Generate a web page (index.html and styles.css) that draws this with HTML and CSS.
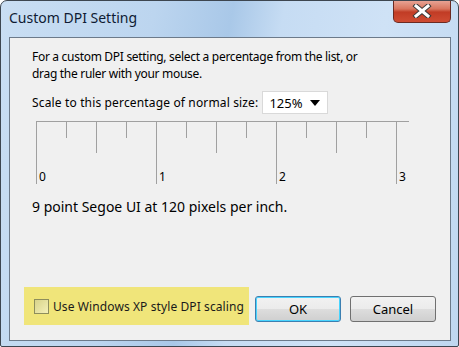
FILE: index.html
```html
<!DOCTYPE html>
<html lang="en">
<head>
    <meta charset="UTF-8">
    <title>Custom DPI Setting</title>
    <link rel="stylesheet" href="styles.css">
</head>
<body>
    <div class="window">
        <div class="titlebar">
            <span class="title">Custom DPI Setting</span>
            <div class="close">
                <svg width="22" height="14" viewBox="0 0 22 14">
                    <path d="M5 2 L17 12 M17 2 L5 12" stroke="#3b3b3b" stroke-width="5" stroke-linecap="square"/>
                    <path d="M5 2 L17 12 M17 2 L5 12" stroke="#fff" stroke-width="3" stroke-linecap="square"/>
                </svg>
            </div>
        </div>
        <div class="client">
            <p class="intro">For a custom DPI setting, select a percentage from the list, or<br>drag the ruler with your mouse.</p>
            <div class="scale-row">
                <span class="scale-label">Scale to this percentage of normal size:</span>
                <div class="dropdown">
                    <span>125%</span>
                    <svg width="10" height="6" viewBox="0 0 10 6"><path d="M0 0 H10 L5 6 Z" fill="#000"/></svg>
                </div>
            </div>
            <svg class="ruler" width="380" height="66" viewBox="0 0 380 66">
                <g stroke="#a0a0a0" stroke-width="1">
                    <path d="M5.5 0.5 H378"/>
                    <path d="M5.5 0 V63"/>
                    <path d="M35.5 0 V17 M65.5 0 V32 M95.5 0 V17"/>
                    <path d="M125.5 0 V63"/>
                    <path d="M155.5 0 V17 M185.5 0 V32 M215.5 0 V17"/>
                    <path d="M245.5 0 V63"/>
                    <path d="M275.5 0 V17 M305.5 0 V32 M335.5 0 V17"/>
                    <path d="M365.5 0 V63"/>
                </g>
                <g class="ruler-num">
                    <text x="8" y="60">0</text>
                    <text x="128" y="60">1</text>
                    <text x="248" y="60">2</text>
                    <text x="368" y="60">3</text>
                </g>
            </svg>
            <p class="sample">9 point Segoe UI at 120 pixels per inch.</p>
            <div class="footer">
                <label class="xp-option">
                    <span class="checkbox"></span>
                    <span>Use Windows XP style DPI scaling</span>
                </label>
                <button class="btn btn-default">OK</button>
                <button class="btn">Cancel</button>
            </div>
        </div>
    </div>
</body>
</html>
```

FILE: styles.css
```css
body {
    margin: 0;
    padding: 0;
    background: #fff;
    font-family: "Noto Sans", "Open Sans", sans-serif;
}
.window {
    width: 459px;
    height: 347px;
    box-sizing: border-box;
    border: 1px solid #3d4650;
    border-radius: 7px 7px 2px 2px;
    background: linear-gradient(100deg, #c9def3 0%, #bcd5ef 30%, #a9c8e8 45%, #c6dcf3 55%, #cfe2f6 75%, #bfd7f0 100%);
    display: flex;
    flex-direction: column;
    overflow: hidden;
}
.titlebar {
    height: 36px;
    display: flex;
    align-items: flex-start;
    justify-content: space-between;
}
.title {
    margin: 7px 0 0 8px;
    font-size: 14px;
    color: #0f1b33;
}
.close {
    width: 58px;
    height: 23px;
    margin-right: 7px;
    margin-top: -1px;
    box-sizing: border-box;
    border: 1px solid #6b2a22;
    border-top: none;
    border-radius: 0 0 5px 5px;
    background: linear-gradient(#e9a89a 0%, #d9765f 40%, #c13c25 55%, #cf4c33 100%);
    display: flex;
    align-items: center;
    justify-content: center;
}
.client {
    flex: 1;
    margin: 0 7px 5px 8px;
    border: 1px solid #6c7a8a;
    background: #f0f0f0;
    display: flex;
    flex-direction: column;
    padding: 0 22px;
    font-size: 12px;
    color: #000;
}
.intro {
    margin: 10px 0 0 0;
    line-height: 17px;
    letter-spacing: -0.3px;
    white-space: nowrap;
}
.scale-row {
    margin-top: 9px;
    display: flex;
    align-items: center;
    gap: 4px;
}
.scale-label {
    letter-spacing: 0.15px;
}
.dropdown {
    width: 66px;
    height: 23px;
    box-sizing: border-box;
    border: 1px solid #d9d9d9;
    background: #fff;
    display: flex;
    align-items: center;
    justify-content: space-between;
    padding: 0 7px 0 6px;
    font-size: 13px;
}
.ruler {
    display: block;
    margin: 7px 0 0 -1px;
}
.ruler-num text {
    font-size: 12px;
    fill: #000;
    font-family: "Noto Sans", sans-serif;
}
.sample {
    margin: 10px 0 0 0;
    font-size: 14px;
}
.footer {
    margin-top: auto;
    margin-bottom: 15px;
    margin-left: -8px;
    display: flex;
    align-items: flex-end;
}
.xp-option {
    flex-shrink: 0;
    width: 225px;
    height: 38px;
    box-sizing: border-box;
    background: #f0e57a;
    display: flex;
    align-items: center;
    gap: 4px;
    padding-left: 10px;
    font-size: 12px;
    letter-spacing: 0.1px;
    color: #1a1a1a;
    white-space: nowrap;
}
.checkbox {
    flex-shrink: 0;
    width: 13px;
    height: 13px;
    border: 1px solid #8e8e5c;
    background: linear-gradient(135deg, #d8d38a, #f4f0b8);
}
.btn {
    flex-shrink: 0;
    width: 86px;
    height: 26px;
    margin-left: 9px;
    margin-bottom: 3px;
    border: 1px solid #707070;
    border-radius: 3px;
    background: linear-gradient(#f2f2f2 0%, #ebebeb 50%, #dddddd 51%, #cfcfcf 100%);
    font-family: "Noto Sans", sans-serif;
    font-size: 13px;
    color: #000;
    padding: 0;
}
.btn-default {
    margin-left: 6px;
    border-color: #3c7fb1;
    box-shadow: inset 0 0 0 1px #48d4fe;
}
```
